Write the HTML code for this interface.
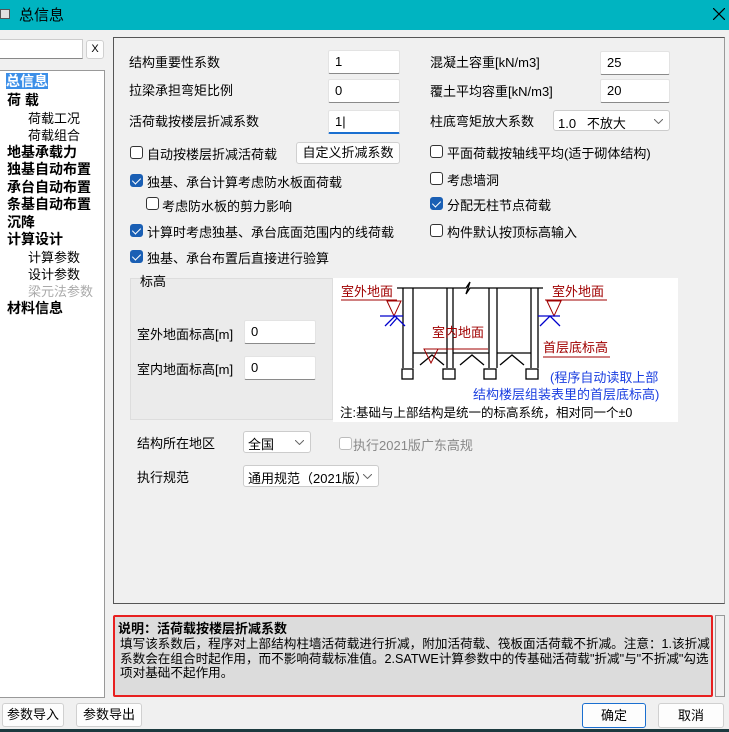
<!DOCTYPE html>
<html><head><meta charset="utf-8"><style>
*{margin:0;padding:0;box-sizing:border-box}
body{width:729px;height:732px;background:#f0f0f0;font-family:"Liberation Sans","Noto Sans CJK SC",sans-serif;font-size:13px;color:#000;position:relative;overflow:hidden}
.a{position:absolute;white-space:nowrap}
.inp{position:absolute;background:#fff;border:1px solid #e3e3e3;border-bottom:1px solid #8a8a8a;border-radius:2px;padding:3px 6px;font-size:13px}
.cb{position:absolute;width:13px;height:13px;border:1px solid #333;border-radius:3px;background:#fff}
.cb.on{background:#1a5fb4;border-color:#1a5fb4}
.cb.on:after{content:"";position:absolute;left:3px;top:1px;width:4px;height:7px;border:solid #fff;border-width:0 1.5px 1.5px 0;transform:rotate(45deg)}
.btn{position:absolute;background:#fdfdfd;border:1px solid #d0d0d0;border-radius:3px;text-align:center;font-size:13px}
.combo{position:absolute;background:#fff;border:1px solid #ccc;border-radius:3px;padding:2px 4px;font-size:13px}
.combo svg{position:absolute;right:6px;top:8px}
.tree div{position:absolute;white-space:nowrap;font-size:14px}
.b{font-weight:bold}
</style></head><body>
<div class="a" style="left:0;top:0;width:729px;height:30px;background:#00b4c1"></div>
<div class="a" style="left:0;top:9px;width:10px;height:10px;background:#e0e0e0;border:1px solid #555"></div>
<div class="a" style="left:19px;top:4px;font-size:15px">总信息</div>
<svg class="a" style="left:713px;top:8px" width="12" height="12"><path d="M0 0L12 12M12 0L0 12" stroke="#000" stroke-width="1.2"/></svg>

<div class="a" style="left:-2px;top:39px;width:85px;height:20px;background:#fff;border:1px solid #ccc;border-bottom-color:#888"></div>
<div class="btn" style="left:86px;top:40px;width:18px;height:19px;font-size:11px;line-height:17px">X</div>

<div class="a tree" style="left:-2px;top:70px;width:107px;height:628px;background:#fff;border:1px solid #999">
<div class="b" style="left:7px;top:2px;background:#3c8fe8;color:#fff;line-height:16px">总信息</div>
<div class="b" style="left:8px;top:19px">荷 载</div>
<div style="left:29px;top:37px;font-size:13px">荷载工况</div>
<div style="left:29px;top:54px;font-size:13px">荷载组合</div>
<div class="b" style="left:8px;top:71px">地基承载力</div>
<div class="b" style="left:8px;top:88px">独基自动布置</div>
<div class="b" style="left:8px;top:106px">承台自动布置</div>
<div class="b" style="left:8px;top:123px">条基自动布置</div>
<div class="b" style="left:8px;top:141px">沉降</div>
<div class="b" style="left:8px;top:158px">计算设计</div>
<div style="left:29px;top:176px;font-size:13px">计算参数</div>
<div style="left:29px;top:193px;font-size:13px">设计参数</div>
<div style="left:29px;top:210px;font-size:13px;color:#aaa">梁元法参数</div>
<div class="b" style="left:8px;top:227px">材料信息</div>
</div>

<div class="a" style="left:113px;top:37px;width:612px;height:567px;border:1px solid #555;border-right-color:#999"></div>

<div class="a" style="left:129px;top:52px">结构重要性系数</div>
<div class="inp" style="left:328px;top:50px;width:72px;height:24px">1</div>
<div class="a" style="left:129px;top:80px">拉梁承担弯矩比例</div>
<div class="inp" style="left:328px;top:79px;width:72px;height:24px">0</div>
<div class="a" style="left:129px;top:111px">活荷载按楼层折减系数</div>
<div class="inp" style="left:328px;top:110px;width:72px;height:24px;border-bottom:2px solid #1a6fd0">1|</div>
<div class="a" style="left:430px;top:52px">混凝土容重[kN/m3]</div>
<div class="inp" style="left:600px;top:51px;width:70px;height:24px">25</div>
<div class="a" style="left:430px;top:81px">覆土平均容重[kN/m3]</div>
<div class="inp" style="left:600px;top:79px;width:70px;height:24px">20</div>
<div class="a" style="left:430px;top:111px">柱底弯矩放大系数</div>
<div class="combo" style="left:553px;top:110px;width:117px;height:21px">1.0&nbsp;&nbsp;&nbsp;不放大<svg width="9" height="5"><path d="M0 0L4.5 4.5L9 0" stroke="#666" fill="none"/></svg></div>

<div class="cb" style="left:130px;top:146px"></div><div class="a" style="left:147px;top:144px">自动按楼层折减活荷载</div>
<div class="btn" style="left:296px;top:142px;width:104px;height:22px;line-height:20px">自定义折减系数</div>
<div class="cb on" style="left:130px;top:174px"></div><div class="a" style="left:147px;top:172px">独基、承台计算考虑防水板面荷载</div>
<div class="cb" style="left:146px;top:197px"></div><div class="a" style="left:162px;top:196px">考虑防水板的剪力影响</div>
<div class="cb on" style="left:130px;top:224px"></div><div class="a" style="left:147px;top:222px">计算时考虑独基、承台底面范围内的线荷载</div>
<div class="cb on" style="left:130px;top:250px"></div><div class="a" style="left:147px;top:248px">独基、承台布置后直接进行验算</div>

<div class="cb" style="left:430px;top:145px"></div><div class="a" style="left:447px;top:143px">平面荷载按轴线平均(适于砌体结构)</div>
<div class="cb" style="left:430px;top:172px"></div><div class="a" style="left:447px;top:170px">考虑墙洞</div>
<div class="cb on" style="left:430px;top:197px"></div><div class="a" style="left:447px;top:195px">分配无柱节点荷载</div>
<div class="cb" style="left:430px;top:224px"></div><div class="a" style="left:447px;top:222px">构件默认按顶标高输入</div>

<div class="a" style="left:130px;top:278px;width:203px;height:142px;background:#ebebeb;border:1px solid #ddd"></div>
<div class="a" style="left:140px;top:271px">标高</div>
<div class="a" style="left:137px;top:324px">室外地面标高[m]</div>
<div class="inp" style="left:244px;top:320px;width:72px;height:24px">0</div>
<div class="a" style="left:137px;top:359px">室内地面标高[m]</div>
<div class="inp" style="left:244px;top:356px;width:72px;height:24px">0</div>

<svg class="a" style="left:333px;top:278px" width="345" height="144" viewBox="333 278 345 144">
<rect x="333" y="278" width="345" height="144" fill="#fff"/>
<g stroke="#000" stroke-width="1.3" fill="none">
<path d="M397 288H466L470 282L466 294L470 288H543"/>
<path d="M403 288V368M413 288V368M447 288V368M453 288V368M489 288V368M497 288V368M531 288V368M538 288V368"/>
<path d="M413 353H447M453 353H489M497 353H531"/>
<rect x="402" y="369" width="11" height="10"/><rect x="443" y="369" width="12" height="10"/><rect x="484" y="369" width="12" height="10"/><rect x="526" y="369" width="12" height="10"/>
<path d="M420 365L432 355L444 365M460 365L472 355L484 365M500 365L512 355L524 365"/>
</g>
<g stroke="#a00000" stroke-width="1" fill="none">
<path d="M341 300H397M545 300H607M428 349H488M543 357H610"/>
<path d="M387 301L394 316L401 301Z M547 301L554 316L561 301Z M424 349L431 363L438 349Z"/>
</g>
<g stroke="#0000cc" stroke-width="1.3" fill="none">
<path d="M380 316H403M385 326L395 316L405 326M390 326L397 318M538 316H560M540 326L550 316L560 326"/>
</g>
<g font-family="Liberation Sans,Noto Sans CJK SC,sans-serif" font-size="13">
<text x="341" y="296" fill="#a00000">室外地面</text>
<text x="552" y="296" fill="#a00000">室外地面</text>
<text x="432" y="337" fill="#a00000">室内地面</text>
<text x="543" y="352" fill="#a00000">首层底标高</text>
<text x="550" y="382" fill="#1a3ee0">(程序自动读取上部</text>
<text x="473" y="399" fill="#1a3ee0">结构楼层组装表里的首层底标高)</text>
<text x="340" y="417" fill="#000" font-size="12.5">注:基础与上部结构是统一的标高系统，相对同一个±0</text>
</g></svg>

<div class="a" style="left:137px;top:433px">结构所在地区</div>
<div class="combo" style="left:243px;top:431px;width:68px;height:22px">全国<svg width="9" height="5"><path d="M0 0L4.5 4.5L9 0" stroke="#666" fill="none"/></svg></div>
<div class="cb" style="left:339px;top:437px;border-color:#bbb"></div><div class="a" style="left:353px;top:435px;color:#888">执行2021版广东高规</div>
<div class="a" style="left:137px;top:467px">执行规范</div>
<div class="combo" style="left:243px;top:465px;width:136px;height:22px">通用规范（2021版）<svg width="9" height="5"><path d="M0 0L4.5 4.5L9 0" stroke="#666" fill="none"/></svg></div>

<div class="a" style="left:113px;top:615px;width:600px;height:82px;background:#dcdcdc;border:2px solid #e82020;border-radius:2px"></div>
<div class="a" style="left:715px;top:615px;width:10px;height:82px;border:1px solid #999"></div>
<div class="a b" style="left:118px;top:618px;font-size:13px">说明：活荷载按楼层折减系数</div>
<div class="a" style="left:120px;top:637px;font-size:12.6px;line-height:14.5px;width:596px;white-space:normal">填写该系数后，程序对上部结构柱墙活荷载进行折减，附加活荷载、筏板面活荷载不折减。注意：1.该折减系数会在组合时起作用，而不影响荷载标准值。2.SATWE计算参数中的传基础活荷载"折减"与"不折减"勾选项对基础不起作用。</div>

<div class="btn" style="left:2px;top:703px;width:62px;height:24px;line-height:22px">参数导入</div>
<div class="btn" style="left:76px;top:703px;width:66px;height:24px;line-height:22px">参数导出</div>
<div class="btn" style="left:582px;top:703px;width:64px;height:25px;line-height:23px;border-color:#1a6fd0">确定</div>
<div class="btn" style="left:658px;top:703px;width:66px;height:25px;line-height:23px">取消</div>
<div class="a" style="left:0;top:729px;width:729px;height:3px;background:#1c3a3f"></div>
</body></html>
